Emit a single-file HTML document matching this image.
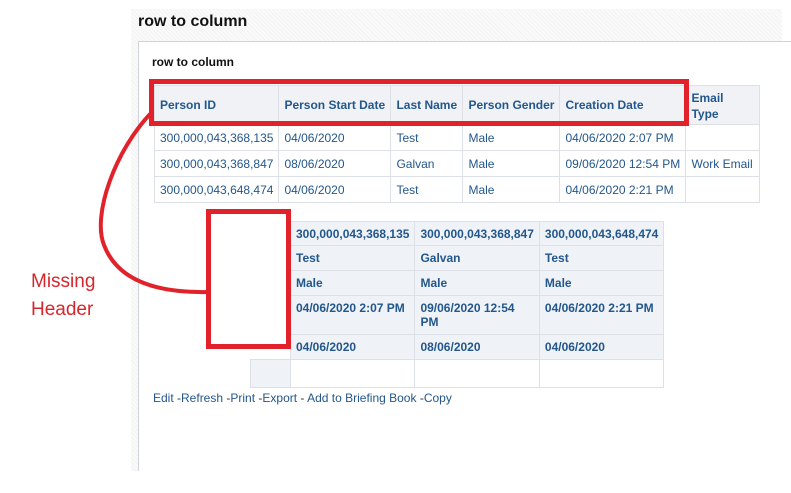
<!DOCTYPE html>
<html><head><meta charset="utf-8"><style>
*{margin:0;padding:0;box-sizing:border-box}
body{width:791px;height:493px;background:#fff;position:relative;overflow:hidden;font-family:"Liberation Sans",Arial,sans-serif}
.a{position:absolute}
.bg{left:131px;top:9px;width:651px;height:462px;background:repeating-linear-gradient(45deg,#f3f3f3 0 1px,#fafafa 1px 3px)}
.panel{left:138px;top:41px;width:653px;height:430px;background:#fff;border-left:1px solid #cfd4dc;border-top:1px solid #cfd4dc}
.title{left:138px;top:13px;font-size:16px;font-weight:bold;color:#111}
.sub{left:152px;top:55px;font-size:12px;font-weight:bold;color:#111}
table{border-collapse:collapse;position:absolute;font-size:12px;color:#23578c}
td{border:1px solid #dde1e7;padding:0 5px;white-space:nowrap;vertical-align:middle}
.t1 .h td{background:#f0f2f6;font-weight:bold;height:39px}
.t1 td{height:26px}
.t2 td{background:#eff2f6;font-weight:bold;vertical-align:top;padding-top:5px}
.t2 td.w{background:#fff}
.links{left:153px;top:391px;font-size:12px;color:#23578c}
.links span{color:#333}
.box{border:5px solid #e1222a}
.lbl{left:31px;top:268px;font-size:19px;line-height:28px;color:#d6262c}
</style></head><body>
<div class="a bg"></div>
<div class="a title">row to column</div>
<div class="a panel"></div>
<div class="a sub">row to column</div>
<table class="t1" style="left:154px;top:85px;width:606px">
<tr class="h"><td style="width:124px">Person ID</td><td style="width:112px">Person Start Date</td><td style="width:72px">Last Name</td><td style="width:97px">Person Gender</td><td style="width:126px">Creation Date</td><td style="line-height:16px;vertical-align:top;padding-top:4px">Email<br>Type</td></tr>
<tr><td>300,000,043,368,135</td><td>04/06/2020</td><td>Test</td><td>Male</td><td>04/06/2020 2:07 PM</td><td></td></tr>
<tr><td>300,000,043,368,847</td><td>08/06/2020</td><td>Galvan</td><td>Male</td><td>09/06/2020 12:54 PM</td><td>Work Email</td></tr>
<tr><td>300,000,043,648,474</td><td>04/06/2020</td><td>Test</td><td>Male</td><td>04/06/2020 2:21 PM</td><td></td></tr>
</table>
<table class="t2" style="left:250px;top:221px;width:413px">
<tr style="height:24px"><td class="w" style="width:40px;min-width:40px;border:none"></td><td style="width:124px">300,000,043,368,135</td><td style="width:126px">300,000,043,368,847</td><td>300,000,043,648,474</td></tr>
<tr style="height:25px"><td class="w" style="border:none"></td><td>Test</td><td>Galvan</td><td>Test</td></tr>
<tr style="height:25px"><td class="w" style="border:none"></td><td>Male</td><td>Male</td><td>Male</td></tr>
<tr style="height:39px"><td class="w" style="border:none"></td><td style="white-space:normal">04/06/2020 2:07 PM</td><td style="white-space:normal;line-height:14px">09/06/2020 12:54 PM</td><td>04/06/2020 2:21 PM</td></tr>
<tr style="height:25px"><td class="w" style="border:none"></td><td>04/06/2020</td><td>08/06/2020</td><td>04/06/2020</td></tr>
<tr style="height:28px"><td></td><td class="w"></td><td class="w"></td><td class="w"></td></tr>
</table>
<div class="a links">Edit <span>-</span>Refresh <span>-</span>Print <span>-</span>Export <span>-</span> Add to Briefing Book <span>-</span>Copy</div>
<div class="a box" style="left:149px;top:79px;width:540px;height:47px"></div>
<div class="a box" style="left:206px;top:209px;width:85px;height:140px"></div>
<svg class="a" style="left:0;top:0" width="791" height="493"><path d="M152,112 C115,150 92,215 104,245 C118,282 160,293 208,292" fill="none" stroke="#e1222a" stroke-width="4"/></svg>
<div class="a lbl">Missing<br>Header</div>
</body></html>
